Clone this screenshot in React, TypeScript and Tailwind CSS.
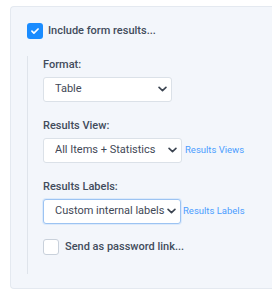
import React from "react";

function Chevron() {
  return (
    <svg viewBox="0 0 10 6" className="pointer-events-none absolute right-[5px] top-1/2 h-[6px] w-[9px] -translate-y-1/2 text-[#3b4451]">
      <path d="M1.2 1.2L5 4.8l3.8-3.6" fill="none" stroke="currentColor" strokeWidth="1.8" strokeLinecap="round" strokeLinejoin="round" />
    </svg>
  );
}

function Select({
  value,
  options,
  width,
  focused,
}: {
  value: string;
  options: string[];
  width: string;
  focused?: boolean;
}) {
  return (
    <div className={`relative ${width}`}>
      <select
        defaultValue={value}
        className={
          "block h-[25px] w-full appearance-none rounded-[3px] border bg-white pl-[11px] pr-[14px] text-[11px] text-[#3f4856] outline-none " +
          (focused ? "border-[#9cc3f2] shadow-[0_0_0_1px_#dceafb]" : "border-[#dbe1e8]")
        }
      >
        {options.map((o) => (
          <option key={o}>{o}</option>
        ))}
      </select>
      <Chevron />
    </div>
  );
}

function Label({ children }: { children: React.ReactNode }) {
  return <div className="mb-[4px] text-[11px] font-medium leading-[16px] text-[#424c5b]">{children}</div>;
}

export default function App() {
  return (
    <div className="h-[300px] w-[272px] bg-white pl-[10px] pt-[6px] font-['Roboto',sans-serif]">
      <div className="h-[283px] rounded-l-[4px] border border-r-0 border-[#e4e9f0] bg-[#f3f6fb] pl-[16px] pt-[16px]">
        {/* main toggle */}
        <label className="flex items-center gap-[5px]">
          <span className="flex h-[16px] w-[16px] items-center justify-center rounded-[3px] bg-[#1a8cff]">
            <svg viewBox="0 0 12 12" className="h-[10px] w-[10px]">
              <path d="M2.3 6.2l2.4 2.4 5-5" fill="none" stroke="white" strokeWidth="2" strokeLinecap="round" strokeLinejoin="round" />
            </svg>
          </span>
          <span className="text-[11px] font-medium text-[#424c5b]">Include form results...</span>
        </label>

        {/* nested options */}
        <div className="mt-[16px] h-[218px] border-l border-[#dfe4eb] pl-[15px] pt-[1px]">
          <Label>Format:</Label>
          <Select value="Table" options={["Table", "List"]} width="w-[129px]" />

          <div className="mt-[16px]">
            <Label>Results View:</Label>
            <div className="flex items-center gap-[3px]">
              <Select value="All Items + Statistics" options={["All Items + Statistics"]} width="w-[139px]" />
              <a className="text-[9.5px] text-[#4a9dff]">Results Views</a>
            </div>
          </div>

          <div className="mt-[16px]">
            <Label>Results Labels:</Label>
            <div className="flex items-center gap-[2px]">
              <Select value="Custom internal labels" options={["Custom internal labels"]} width="w-[138px]" focused />
              <a className="text-[9.5px] text-[#4a9dff]">Results Labels</a>
            </div>
          </div>

          <label className="mt-[15px] flex items-center gap-[6px]">
            <span className="h-[16px] w-[16px] rounded-[3px] border border-[#c9d1db] bg-white" />
            <span className="text-[11px] font-medium text-[#424c5b]">Send as password link...</span>
          </label>
        </div>
      </div>
    </div>
  );
}
